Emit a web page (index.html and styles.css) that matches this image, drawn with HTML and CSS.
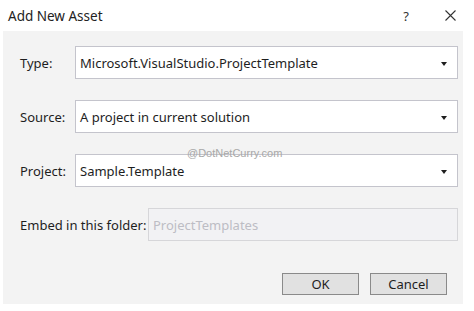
FILE: index.html
```html
<!DOCTYPE html>
<html lang="en">
  <head>
    <meta charset="UTF-8" />
    <title>Add New Asset</title>
    <link rel="stylesheet" href="styles.css">
  </head>
  <body>
    <div class="titlebar">
      <span class="title">Add New Asset</span>
      <span class="title-btn help">?</span>
      <span class="title-btn close">
        <svg width="11" height="11" viewBox="0 0 11 11"><path d="M0.5 0.5 L10.5 10.5 M10.5 0.5 L0.5 10.5" stroke="#333" stroke-width="1.1" fill="none"/></svg>
      </span>
    </div>

    <div class="panel">
      <div class="row">
        <label class="label">Type:</label>
        <div class="select">
          <span class="value">Microsoft.VisualStudio.ProjectTemplate</span>
          <span class="arrow"></span>
        </div>
      </div>
      <div class="row">
        <label class="label">Source:</label>
        <div class="select">
          <span class="value">A project in current solution</span>
          <span class="arrow"></span>
        </div>
      </div>
      <div class="row">
        <label class="label">Project:</label>
        <div class="select">
          <span class="value">Sample.Template</span>
          <span class="arrow"></span>
        </div>
        <span class="watermark">@DotNetCurry.com</span>
      </div>
      <div class="row">
        <label class="label label-wide">Embed in this folder:</label>
        <div class="textbox disabled">
          <span class="value">ProjectTemplates</span>
        </div>
      </div>

      <div class="actions">
        <button class="btn">OK</button>
        <button class="btn">Cancel</button>
      </div>
    </div>
  </body>
</html>
```
FILE: styles.css
```css
body {
  margin: 0;
  background-color: #fff;
  font-family: "Noto Sans", "Open Sans", sans-serif;
  font-size: 13px;
  color: #1e1e1e;
}

.titlebar {
  height: 31px;
  display: flex;
  align-items: center;
  padding: 0 0 0 8px;
}

.title {
  flex: 1;
  font-size: 13.5px;
  color: #222;
}

.title-btn {
  display: flex;
  justify-content: center;
  align-items: center;
  color: #333;
}

.help {
  width: 20px;
  margin-right: 29px;
  font-size: 13px;
}

.close {
  width: 11px;
  margin-right: 18px;
}

.panel {
  margin: 0 11px 5px 3px;
  padding: 15px 5px 9px 17px;
  background-color: #f3f3f3;
  display: flex;
  flex-direction: column;
  gap: 21px;
}

.row {
  position: relative;
  display: flex;
  align-items: center;
}

.label {
  width: 55px;
  flex-shrink: 0;
}

.label-wide {
  width: 128px;
}

.select,
.textbox {
  flex: 1;
  height: 33px;
  box-sizing: border-box;
  border: 1px solid #c4c4cc;
  background-color: #fff;
  display: flex;
  align-items: center;
  padding: 0 10px 0 4px;
}

.value {
  flex: 1;
}

.arrow {
  width: 0;
  height: 0;
  border-left: 3px solid transparent;
  border-right: 3px solid transparent;
  border-top: 4px solid #1e1e1e;
  margin-top: 2px;
}

.textbox.disabled {
  background-color: #f2f2f4;
  border-color: #d6d6d9;
  color: #bdbdc4;
}

.watermark {
  position: absolute;
  left: 167px;
  top: -7px;
  font-family: "Liberation Sans", sans-serif;
  font-size: 11px;
  color: #a8a8a8;
}

.actions {
  display: flex;
  justify-content: flex-end;
  gap: 11px;
  margin-top: 11px;
  padding-right: 11px;
}

.btn {
  width: 77px;
  height: 22px;
  box-sizing: border-box;
  border: 1px solid #8a8a8a;
  background-color: #e1e1e1;
  font-family: "Noto Sans", "Open Sans", sans-serif;
  font-size: 13px;
  color: #1e1e1e;
  padding: 0;
}
```
